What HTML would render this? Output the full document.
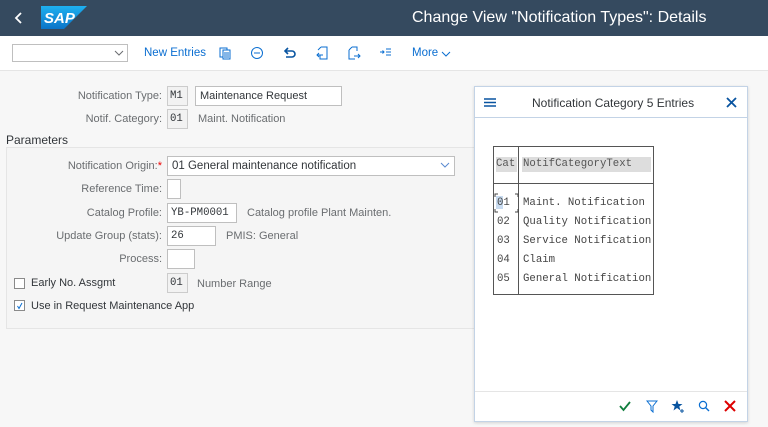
<!DOCTYPE html>
<html><head><meta charset="utf-8"><style>
*{box-sizing:border-box;margin:0;padding:0}
body{width:768px;height:427px;overflow:hidden;background:#f7f7f7;font-family:"Liberation Sans",sans-serif;font-size:11px;color:#32363a;position:relative}
.a{position:absolute;white-space:nowrap}
.hdr{left:0;top:0;width:768px;height:36px;background:#354a5f}
.tb{left:0;top:36px;width:768px;height:35px;background:#fff;border-bottom:1px solid #e5e5e5}
.lbl{color:#6a6d70;text-align:right;font-size:11px}
.inp{background:#fff;border:1px solid #bfbfbf;height:20px;font-size:11px;padding:2px 4px;line-height:15px}
.ro{background:#f2f2f2;border:1px solid #ccc;height:20px;font-family:"Liberation Mono",monospace;font-size:10.7px;padding:2px 2px;line-height:15px;color:#32363a}
.mono{font-family:"Liberation Mono",monospace;font-size:10.7px}
.blue{color:#0a6ed1}
.cb{width:11px;height:11px;border:1px solid #8a8a8a;background:#fff}
</style></head><body>
<div class="a hdr"></div>
<svg class="a" style="left:14px;top:11px" width="10" height="14"><path d="M7 2 L2 7 L7 12" stroke="#fff" stroke-width="1.8" fill="none"/></svg>
<svg class="a" style="left:41px;top:6px" width="46" height="23"><defs><linearGradient id="g" x1="0" y1="0" x2="0" y2="1"><stop offset="0" stop-color="#1eb0f0"/><stop offset="1" stop-color="#0b74c8"/></linearGradient></defs><path d="M0 0H46L23 23H0Z" fill="url(#g)"/><text x="3" y="17" font-family="Liberation Sans" font-weight="bold" font-size="15" fill="#fff" font-style="italic">SAP</text></svg>
<div class="a" style="left:412px;top:9px;color:#fff;font-size:16px">Change View "Notification Types": Details</div>
<div class="a tb"></div>
<div class="a inp" style="left:12px;top:44px;width:116px;height:18px"></div>
<svg class="a" style="left:114px;top:50px" width="10" height="6"><path d="M1 1L5 5L9 1" stroke="#6a6d70" fill="none"/></svg>
<div class="a blue" style="left:144px;top:47px;font-size:11.5px">New Entries</div>
<svg class="a" style="left:218px;top:46px" width="14" height="14"><rect x="2" y="2" width="7" height="9" fill="none" stroke="#0a6ed1"/><rect x="5" y="4" width="7" height="9" fill="#fff" stroke="#0a6ed1"/><path d="M6 7h5M6 9h5M6 11h5" stroke="#0a6ed1"/></svg>
<svg class="a" style="left:250px;top:46px" width="14" height="14"><circle cx="7" cy="7" r="5.5" fill="none" stroke="#0a6ed1"/><path d="M4 7h6" stroke="#0a6ed1"/></svg>
<svg class="a" style="left:283px;top:46px" width="14" height="14"><path d="M5 2L2 5L5 8" stroke="#0854a0" stroke-width="1.6" fill="none"/><path d="M2 5H9a3 3 0 0 1 0 6H3" stroke="#0854a0" stroke-width="1.6" fill="none"/></svg>
<svg class="a" style="left:315px;top:45px" width="14" height="16"><path d="M6 2H12V14H5V10" stroke="#0a6ed1" fill="none"/><path d="M6 2L3 5" stroke="#0a6ed1"/><path d="M8 10H2M4 8L2 10L4 12" stroke="#0a6ed1" fill="none"/></svg>
<svg class="a" style="left:347px;top:45px" width="14" height="16"><path d="M5 2H10V6M2 5V14H8" stroke="#0a6ed1" fill="none"/><path d="M5 2L2 5" stroke="#0a6ed1"/><path d="M7 11H13M11 9L13 11L11 13" stroke="#0a6ed1" fill="none"/></svg>
<svg class="a" style="left:379px;top:47px" width="14" height="12"><path d="M1 5H5M3.5 3.5L5 5L3.5 6.5M7 2H12M7 5H12M7 8H12" stroke="#0a6ed1" fill="none"/></svg>
<div class="a blue" style="left:412px;top:47px;font-size:11.5px">More</div>
<svg class="a" style="left:441px;top:51px" width="10" height="6"><path d="M1 1L5 5L9 1" stroke="#0a6ed1" fill="none"/></svg>

<div class="a lbl" style="left:40px;top:90px;width:122px">Notification Type:</div>
<div class="a ro" style="left:167px;top:86px;width:21px">M1</div>
<div class="a inp" style="left:195px;top:86px;width:147px">Maintenance Request</div>
<div class="a lbl" style="left:40px;top:113px;width:122px">Notif. Category:</div>
<div class="a ro" style="left:167px;top:109px;width:21px">01</div>
<div class="a" style="left:198px;top:113px;color:#6a6d70">Maint. Notification</div>

<div class="a" style="left:6px;top:133px;font-size:12px">Parameters</div>
<div class="a" style="left:6px;top:147px;width:480px;height:182px;background:#f5f5f5;border:1px solid #e5e5e5"></div>
<div class="a lbl" style="left:20px;top:160px;width:142px">Notification Origin:<span style="color:#e00">*</span></div>
<div class="a inp" style="left:167px;top:156px;width:288px;font-size:11.5px">01 General maintenance notification</div>
<svg class="a" style="left:440px;top:162px" width="10" height="6"><path d="M1 1L5 5L9 1" stroke="#5a8ad0" fill="none"/></svg>
<div class="a lbl" style="left:20px;top:183px;width:142px">Reference Time:</div>
<div class="a inp" style="left:167px;top:179px;width:14px"></div>
<div class="a lbl" style="left:20px;top:207px;width:142px">Catalog Profile:</div>
<div class="a inp mono" style="left:167px;top:203px;width:70px;padding:2px 3px">YB-PM0001</div>
<div class="a" style="left:247px;top:207px;color:#6a6d70">Catalog profile Plant Mainten.</div>
<div class="a lbl" style="left:20px;top:230px;width:142px">Update Group (stats):</div>
<div class="a inp mono" style="left:167px;top:226px;width:49px;padding:2px 3px">26</div>
<div class="a" style="left:226px;top:230px;color:#6a6d70">PMIS: General</div>
<div class="a lbl" style="left:20px;top:253px;width:142px">Process:</div>
<div class="a inp" style="left:167px;top:249px;width:28px"></div>
<div class="a cb" style="left:14px;top:278px"></div>
<div class="a" style="left:31px;top:277px">Early No. Assgmt</div>
<div class="a ro" style="left:167px;top:273px;width:21px">01</div>
<div class="a" style="left:197px;top:278px;color:#6a6d70">Number Range</div>
<div class="a cb" style="left:14px;top:300px"></div>
<svg class="a" style="left:15px;top:301px" width="10" height="10"><path d="M2.5 5L4 7.5L7 2" stroke="#0a6ed1" fill="none"/></svg>
<div class="a" style="left:31px;top:300px">Use in Request Maintenance App</div>

<div class="a" style="left:474px;top:86px;width:274px;height:336px;background:#fff;border:1px solid #c3d3e6;box-shadow:0 1px 3px rgba(0,0,0,.15)"></div>
<div class="a" style="left:475px;top:117px;width:272px;height:1px;background:#c3d3e6"></div>
<svg class="a" style="left:484px;top:97px" width="13" height="11"><path d="M0 2H12M0 5.5H12M0 9H12" stroke="#0854a0" stroke-width="1.6"/></svg>
<div class="a" style="left:532px;top:96px;font-size:12px">Notification Category 5 Entries</div>
<svg class="a" style="left:726px;top:97px" width="11" height="11"><path d="M1 1L10 10M10 1L1 10" stroke="#0854a0" stroke-width="1.8"/></svg>
<div class="a" style="left:493px;top:146px;width:161px;height:149px;border:1px solid #555"></div>
<div class="a" style="left:518px;top:146px;width:1px;height:149px;background:#555"></div>
<div class="a" style="left:493px;top:183px;width:161px;height:1px;background:#555"></div>
<div class="a mono" style="left:496px;top:157px;width:21px;background:#ddd;color:#555;line-height:15px">Cat</div>
<div class="a mono" style="left:522px;top:157px;width:129px;background:#ddd;color:#555;padding:0 1px;line-height:15px">NotifCategoryText</div>
<div class="a" style="left:496px;top:196px;width:7px;height:13px;background:#c8dbf0"></div>
<div class="a mono" style="left:497px;top:194px;line-height:19px;color:#444">01<br>02<br>03<br>04<br>05</div>
<svg class="a" style="left:494px;top:193px" width="25" height="20"><path d="M1 4V1H4M21 1H24V4M24 16V19H21M4 19H1V16" stroke="#444" fill="none"/></svg>
<div class="a mono" style="left:523px;top:194px;line-height:19px;color:#444">Maint. Notification<br>Quality Notification<br>Service Notification<br>Claim<br>General Notification</div>
<div class="a" style="left:475px;top:391px;width:272px;height:1px;background:#e5e5e5"></div>
<svg class="a" style="left:619px;top:401px" width="12" height="11"><path d="M1 5L4.5 9L11 1" stroke="#107e3e" stroke-width="1.8" fill="none"/></svg>
<svg class="a" style="left:646px;top:400px" width="12" height="13"><path d="M1 1H11L7 6V12L5 10V6Z" stroke="#0a6ed1" fill="none"/></svg>
<svg class="a" style="left:671px;top:399px" width="14" height="14"><path d="M6 1L7.5 5H11.5L8.3 7.5L9.5 11.5L6 9L2.5 11.5L3.7 7.5L0.5 5H4.5Z" fill="#0854a0"/><path d="M11 10V14M9 12H13" stroke="#0854a0"/></svg>
<svg class="a" style="left:698px;top:400px" width="12" height="12"><circle cx="5" cy="5" r="3.6" fill="none" stroke="#0a6ed1" stroke-width="1.2"/><path d="M7.5 7.5L11 11" stroke="#0a6ed1" stroke-width="1.4"/></svg>
<svg class="a" style="left:724px;top:400px" width="12" height="12"><path d="M1 1L11 11M11 1L1 11" stroke="#d00" stroke-width="2"/></svg>
</body></html>
